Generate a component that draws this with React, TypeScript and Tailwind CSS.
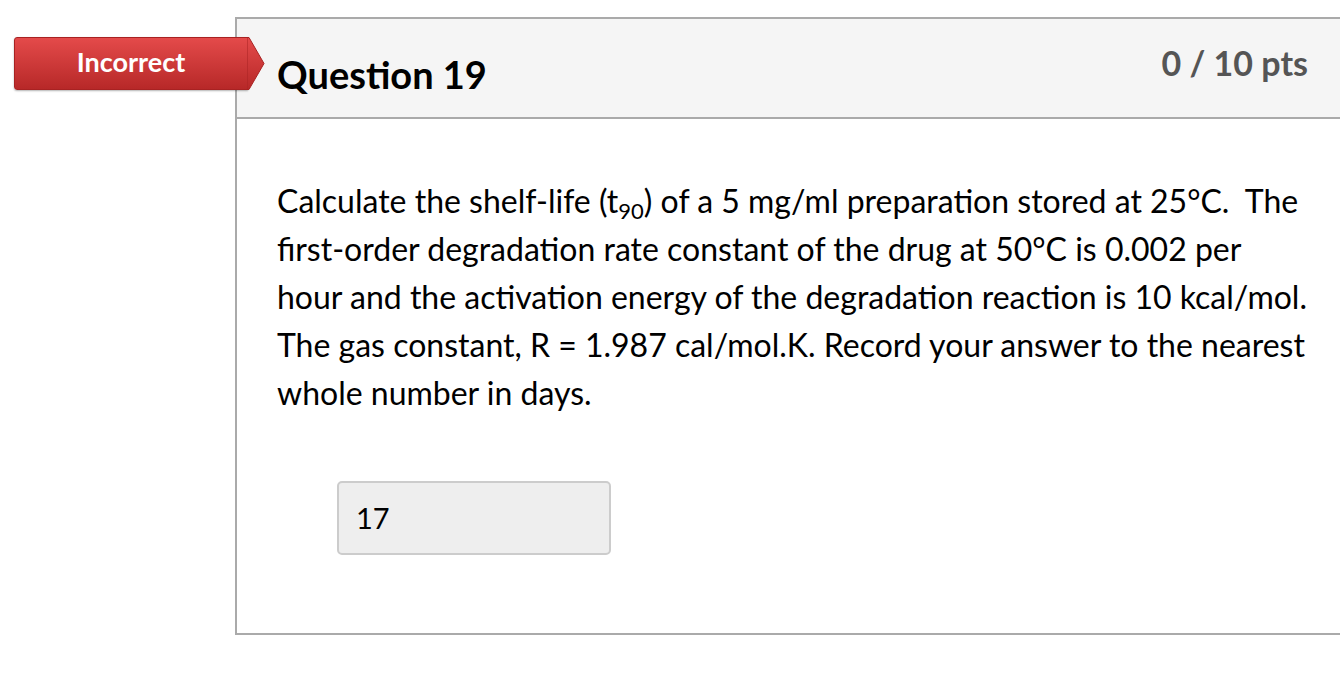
export default function App() {
  return (
    <div className="relative w-[1340px] h-[686px] overflow-hidden bg-white font-['Lato','Liberation_Sans',sans-serif] text-black">
      {/* result badge */}
      <div className="absolute left-[14px] top-[37px] z-10 flex">
        <div className="flex h-[53px] w-[234px] items-center justify-center rounded-l-[3px] border border-[#a82222] bg-gradient-to-b from-[#e44a4a] to-[#b72828] shadow-[0_1px_2px_rgba(0,0,0,0.3)]">
          <span className="mb-[2px] text-[27px] font-bold text-white">Incorrect</span>
        </div>
        <svg width="18" height="53" viewBox="0 0 18 53" className="-ml-[1px]">
          <defs>
            <linearGradient id="g" x1="0" y1="0" x2="0" y2="1">
              <stop offset="0" stopColor="#e44a4a" />
              <stop offset="1" stopColor="#b72828" />
            </linearGradient>
          </defs>
          <path d="M0 0.5 L2 0.5 L17 26.5 L2 52.5 L0 52.5 Z" fill="url(#g)" stroke="#a82222" strokeWidth="1" />
        </svg>
      </div>

      {/* question card */}
      <div className="ml-[235px] mt-[17px] w-[1130px] border-2 border-[#aaaaaa]">
        <div className="flex h-[100px] items-start justify-between border-b-2 border-[#aaaaaa] bg-[#f5f5f5] pl-[40px] pr-[55px]">
          <h2 className="mt-[33px] text-[38px] font-bold leading-[44px]">Question 19</h2>
          <div className="mt-[24px] text-[34px] font-bold leading-[40px] text-[#555555]">0 / 10 pts</div>
        </div>
        <div className="pl-[40px] pt-[58px] pb-[78px]">
          <p className="w-[1030px] text-[32px] leading-[48px]">
            Calculate the shelf-life (t<sub className="text-[22px]">90</sub>) of a 5 mg/ml preparation stored at 25°C.{'\u00a0'} The
            first-order degradation rate constant of the drug at 50°C is 0.002 per hour and the activation energy of the
            degradation reaction is 10 kcal/mol. The gas constant, R = 1.987 cal/mol.K. Record your answer to the nearest
            whole number in days.
          </p>
          <div className="ml-[60px] mt-[64px] flex h-[74px] w-[274px] items-center rounded-[5px] border-2 border-[#cccccc] bg-[#eeeeee] pl-[17px] text-[29px]">
            17
          </div>
        </div>
      </div>
    </div>
  )
}
